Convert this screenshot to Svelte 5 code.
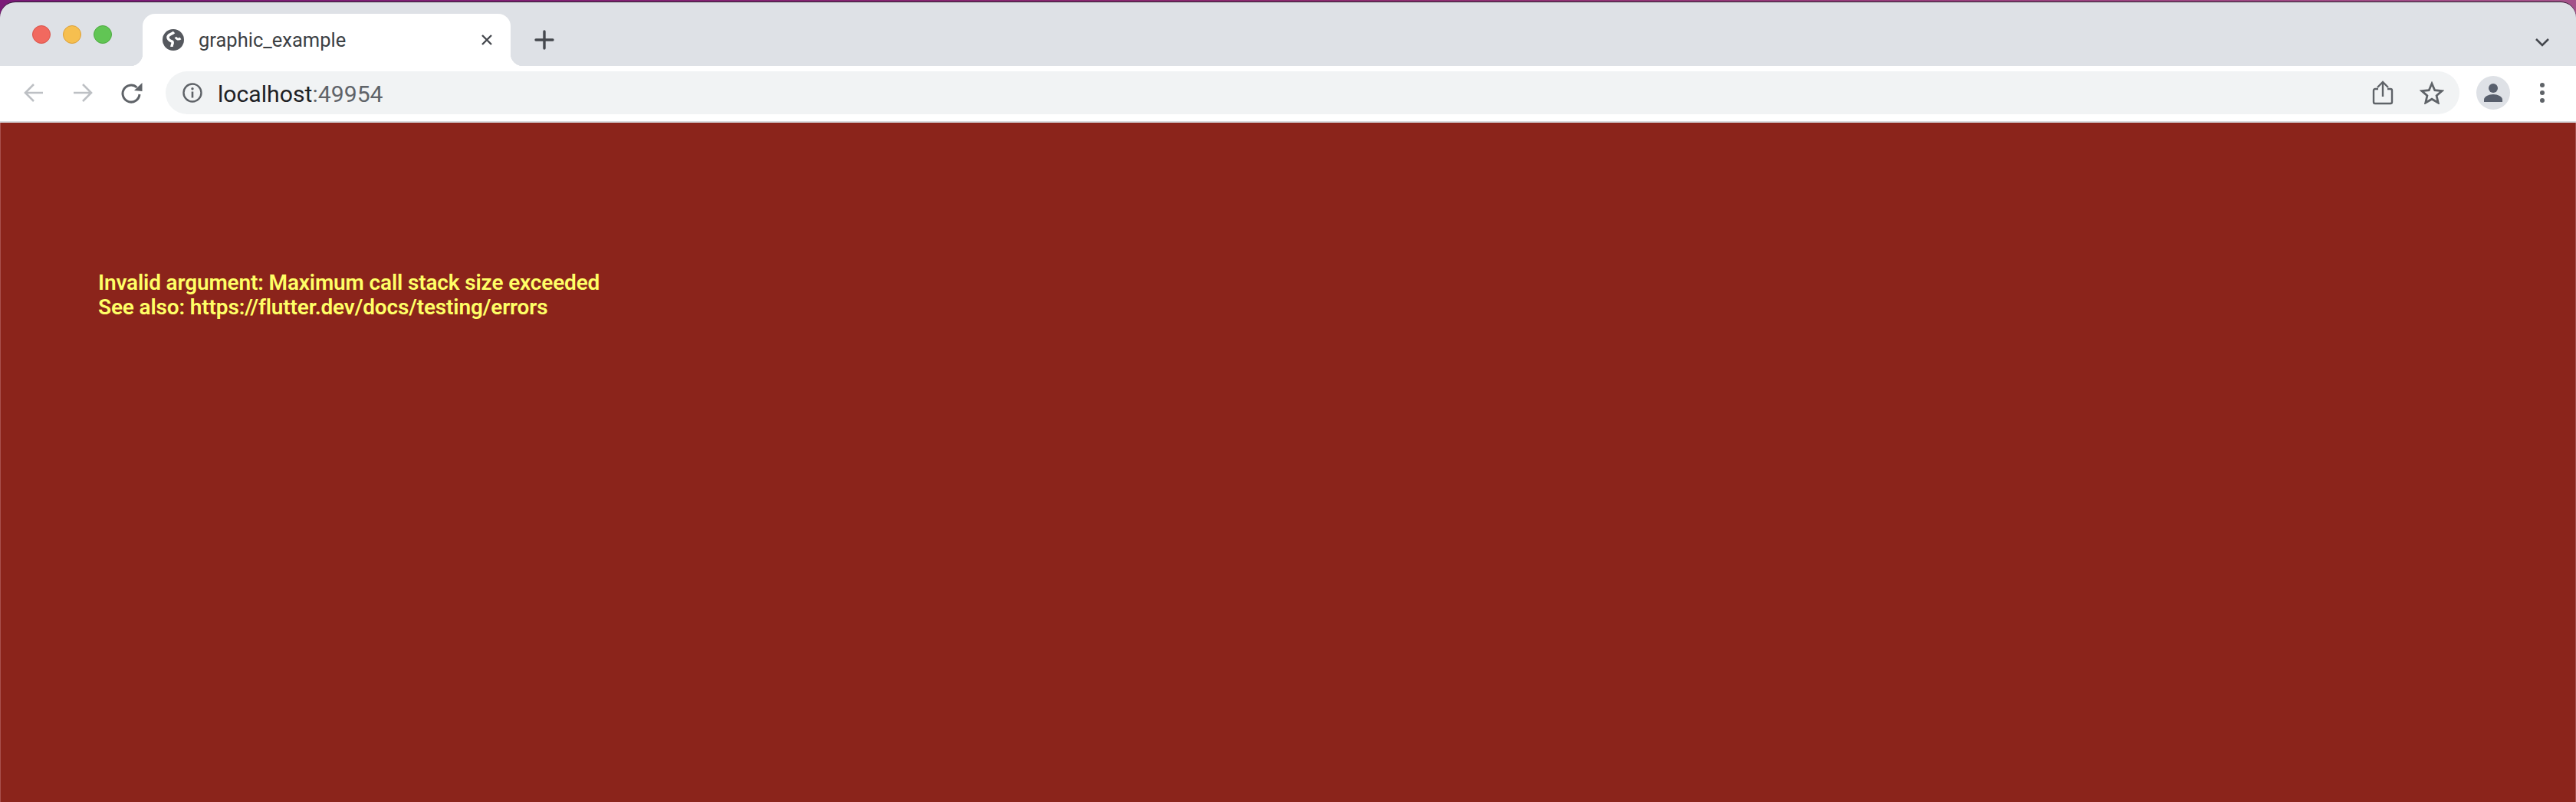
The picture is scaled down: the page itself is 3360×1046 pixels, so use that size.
<script>
  const lines = [
    'Invalid argument: Maximum call stack size exceeded',
    'See also: https://flutter.dev/docs/testing/errors'
  ];
</script>

<div class="screen">
  <div class="window">
    <div class="tabstrip">
      <div class="lights">
        <span class="light red"></span>
        <span class="light yellow"></span>
        <span class="light green"></span>
      </div>

      <div class="tab">
        <svg class="globe" viewBox="0 0 28 28">
          <circle cx="14" cy="14" r="14" fill="#55585e" />
          <path d="M15 4C12 7 8 6 7 10c-.5 4 3 5 6 6.500 1 2-1 3.500-1 6.500" stroke="#fff" stroke-width="3.500" fill="none" />
          <path d="M17 10.500c1 2.500 4 3.500 6.500 1.500" stroke="#fff" stroke-width="3" fill="none" />
        </svg>
        <span class="tab-title">graphic_example</span>
        <svg class="close" viewBox="0 0 20 20">
          <path d="M4 4l12 12M16 4L4 16" stroke="#45484e" stroke-width="2.400" fill="none" />
        </svg>
      </div>

      <svg class="plus" viewBox="0 0 26 26">
        <path d="M13 2v22M2 13h22" stroke="#45484e" stroke-width="3.400" stroke-linecap="round" fill="none" />
      </svg>

      <svg class="chevron" viewBox="0 0 20 12">
        <path d="M2 2l8 8 8-8" stroke="#45484e" stroke-width="2.600" fill="none" />
      </svg>
    </div>

    <div class="toolbar">
      <button class="tool" aria-label="Back">
        <svg viewBox="0 0 28 28" width="28" height="28">
          <path d="M26 14H3M14 3L3 14l11 11" stroke="#bdc0c4" stroke-width="2.600" fill="none" />
        </svg>
      </button>
      <button class="tool" aria-label="Forward">
        <svg viewBox="0 0 28 28" width="28" height="28">
          <path d="M2 14h23M14 3l11 11-11 11" stroke="#bdc0c4" stroke-width="2.600" fill="none" />
        </svg>
      </button>
      <button class="tool" aria-label="Reload">
        <svg viewBox="0 0 30 28" width="30" height="28">
          <path d="M21.500 7A11 11 0 1 0 25 16" stroke="#5f6368" stroke-width="3" fill="none" />
          <path d="M28.500 1v11L18 11z" fill="#5f6368" />
        </svg>
      </button>

      <div class="omnibox">
        <svg class="info" viewBox="0 0 26 26">
          <circle cx="13" cy="13" r="11.500" stroke="#5f6368" stroke-width="2.400" fill="none" />
          <path d="M13 11.500v8" stroke="#5f6368" stroke-width="2.600" fill="none" />
          <circle cx="13" cy="7.800" r="1.700" fill="#5f6368" />
        </svg>
        <span class="url">localhost<span class="port">:49954</span></span>
        <button class="tool push" aria-label="Share">
          <svg viewBox="0 0 28 32" width="28" height="32">
            <path d="M8 11H4a2 2 0 0 0-2 2v15a2 2 0 0 0 2 2h20a2 2 0 0 0 2-2V13a2 2 0 0 0-2-2h-4" stroke="#5f6368" stroke-width="2.400" fill="none" />
            <path d="M14 21V3M7 9l7-7 7 7" stroke="#5f6368" stroke-width="2.400" fill="none" />
          </svg>
        </button>
        <button class="tool" aria-label="Bookmark">
          <svg viewBox="0 0 32 30" width="32" height="30">
            <path d="M16 3l3.800 8.700 9.400.9-7.100 6.200 2.100 9.200-8.200-4.800-8.200 4.800 2.100-9.200-7.100-6.200 9.400-.9z" stroke="#5f6368" stroke-width="2.800" fill="none" />
          </svg>
        </button>
      </div>

      <button class="tool" aria-label="Profile">
        <span class="avatar">
          <svg viewBox="0 0 26 26" width="26" height="26">
            <circle cx="13" cy="7" r="6" fill="#585f6d" />
            <path d="M1 25v-3c0-4 6-7 12-7s12 3 12 7v3z" fill="#585f6d" />
          </svg>
        </span>
      </button>
      <button class="tool" aria-label="Menu">
        <svg viewBox="0 0 8 28" width="8" height="28">
          <circle cx="4" cy="4" r="3" fill="#5f6368" />
          <circle cx="4" cy="14" r="3" fill="#5f6368" />
          <circle cx="4" cy="24" r="3" fill="#5f6368" />
        </svg>
      </button>
    </div>

    <main class="page">
      {#each lines as line}
        <p>{line}</p>
      {/each}
    </main>
  </div>
</div>

<style>
  :global(body) {
    margin: 0;
    background: #8b241b;
  }

  .screen {
    height: 1046px;
    overflow: hidden;
    padding-top: 3px;
    box-sizing: border-box;
    background: linear-gradient(90deg, #7b1a78 0%, #8c2a6e 50%, #a5528a 100%);
  }

  .window {
    height: 100%;
    display: flex;
    flex-direction: column;
    border-radius: 20px 20px 0 0;
    overflow: hidden;
    box-shadow: 0 -1px 0 #2b2130;
  }

  .tabstrip {
    height: 83px;
    flex: none;
    display: flex;
    background: #dee1e6;
  }

  .lights {
    display: flex;
    gap: 16px;
    padding: 30px 0 0 42px;
  }

  .light {
    width: 22px;
    height: 22px;
    border: 1px solid;
    border-radius: 50%;
  }

  .red { background: #f1695f; border-color: #d9534a; }
  .yellow { background: #f6bf4f; border-color: #dc9f37; }
  .green { background: #61c554; border-color: #4daa40; }

  .tab {
    position: relative;
    align-self: flex-end;
    width: 480px;
    height: 68px;
    box-sizing: border-box;
    margin-left: 40px;
    padding: 0 22px 0 26px;
    display: flex;
    align-items: center;
    background: #fff;
    border-radius: 16px 16px 0 0;
  }

  .tab::before,
  .tab::after {
    content: '';
    position: absolute;
    bottom: 0;
    width: 16px;
    height: 16px;
  }

  .tab::before {
    left: -16px;
    background: radial-gradient(circle at 0 0, transparent 16px, #fff 16.500px);
  }

  .tab::after {
    right: -16px;
    background: radial-gradient(circle at 100% 0, transparent 16px, #fff 16.500px);
  }

  .globe {
    width: 28px;
    height: 28px;
    flex: none;
  }

  .tab-title {
    margin-left: 19px;
    font: 400 25.500px "Roboto", sans-serif;
    color: #3c4043;
  }

  .close {
    width: 20px;
    height: 20px;
    margin-left: auto;
    margin-right: -1px;
  }

  .plus {
    width: 26px;
    height: 26px;
    margin: 36px 0 0 31px;
  }

  .chevron {
    width: 20px;
    height: 12px;
    margin: 46px 34px 0 auto;
  }

  .toolbar {
    height: 74px;
    flex: none;
    box-sizing: border-box;
    padding: 8px 12px 10px;
    display: flex;
    align-items: center;
    background: #fff;
    border-bottom: 2px solid #dadce0;
  }

  .tool {
    width: 64px;
    height: 54px;
    flex: none;
    padding: 0;
    border: 0;
    background: none;
    display: flex;
    align-items: center;
    justify-content: center;
  }

  .omnibox {
    flex: 1;
    height: 56px;
    margin: 0 12px;
    padding: 0 4px 0 22px;
    display: flex;
    align-items: center;
    border-radius: 28px;
    background: #f1f3f4;
  }

  .info {
    width: 26px;
    height: 26px;
    flex: none;
  }

  .url {
    margin-left: 20px;
    padding-top: 2px;
    font: 400 30.200px "Roboto", sans-serif;
    color: #202124;
  }

  .port {
    color: #5f6368;
  }

  .push {
    margin-left: auto;
  }

  .avatar {
    width: 44px;
    height: 44px;
    display: flex;
    align-items: center;
    justify-content: center;
    border-radius: 50%;
    background: #dee1e6;
  }

  .page {
    flex: 1;
    padding: 193px 0 0 127px;
    background: #8b241b;
    border: solid #a9504c;
    border-width: 0 1px;
  }

  .page p {
    margin: 0;
    font: 600 28px/32px "Roboto", sans-serif;
    letter-spacing: -0.150px;
    color: #ffff66;
  }
</style>
